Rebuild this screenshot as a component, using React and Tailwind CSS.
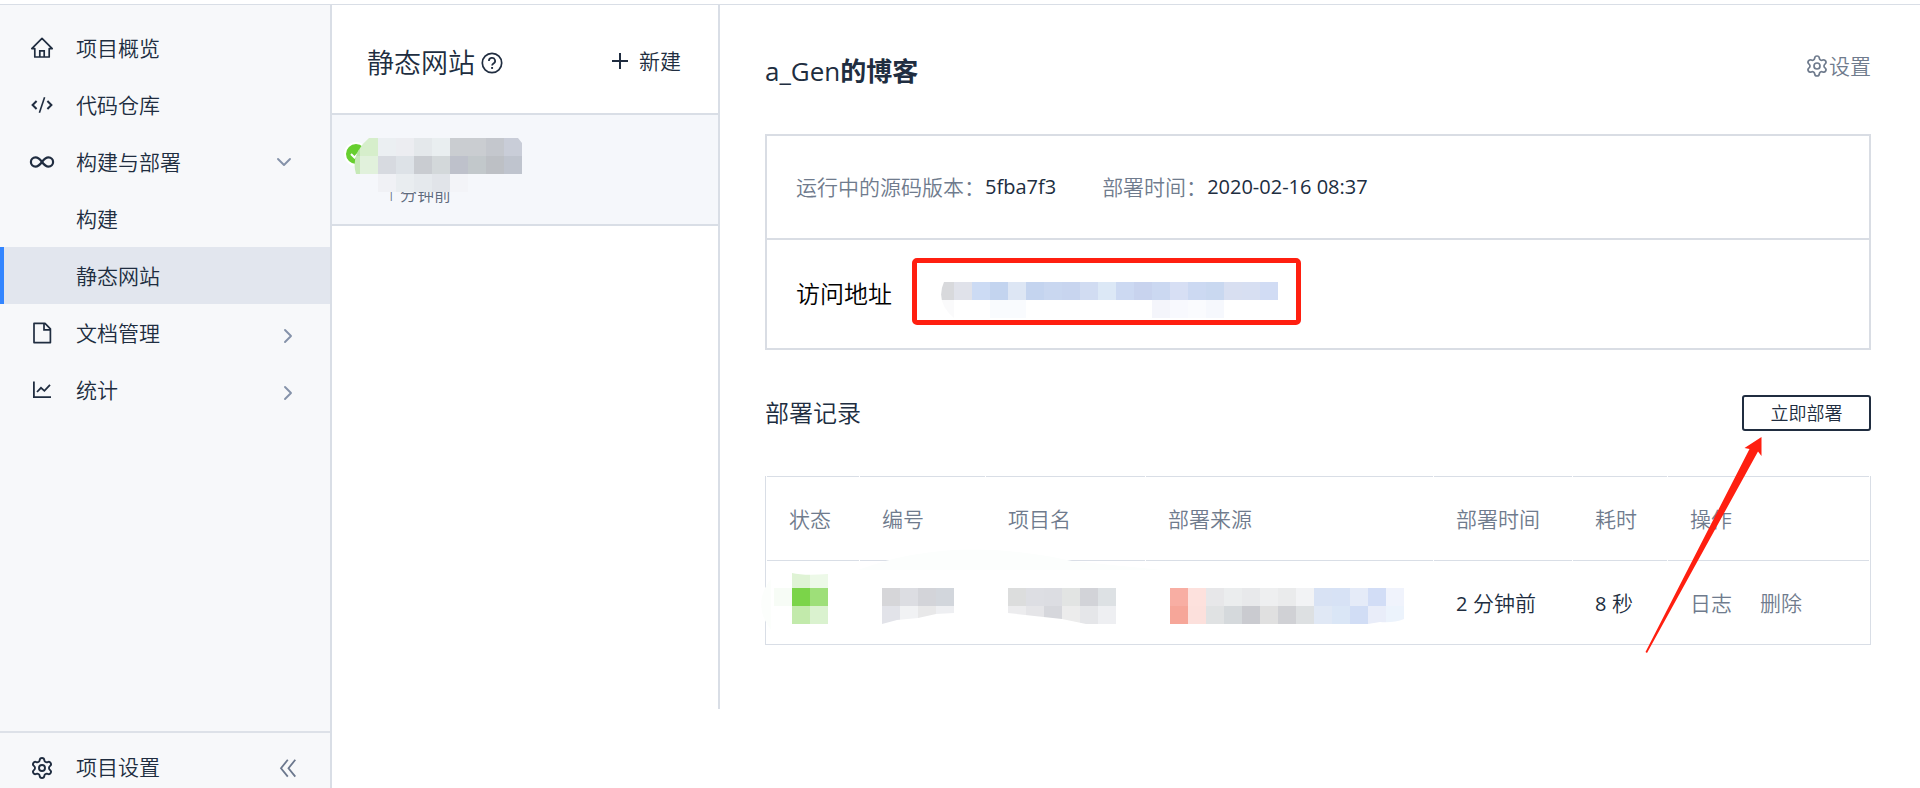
import { useId } from "react";
import { ChevronDown, ChevronRight, Settings } from "lucide-react";

function HomeIcon() {
  return (
    <svg className="w-6 h-6" viewBox="0 0 24 24" fill="none" stroke="currentColor" strokeWidth="1.7">
      <path d="M1.8 12.6 12 2.4l10.2 10.2H19.2V21H4.8v-8.4Z" strokeLinejoin="round" />
      <path d="M9.8 21v-6.2h4.4V21" />
    </svg>
  );
}

function CodeIcon() {
  return (
    <svg className="w-6 h-6" viewBox="0 0 24 24" fill="none" stroke="currentColor" strokeWidth="2">
      <path d="M6.6 8 2.6 12l4 4M17.4 8l4 4-4 4" />
      <path d="M14.6 4.2 9.4 19.8" strokeWidth="1.6" />
    </svg>
  );
}

function InfinityIcon() {
  return (
    <svg
      className="w-6 h-6 overflow-visible"
      viewBox="0 0 24 24"
      fill="none"
      stroke="currentColor"
      strokeWidth="2.2"
    >
      <path d="M12 12C9.500 8.600 7.800 7.400 5.500 7.400a4.600 4.600 0 0 0 0 9.200c2.300 0 4-1.200 6.500-4.600s4.200-4.600 6.500-4.600a4.600 4.600 0 0 1 0 9.200c-2.300 0-4-1.200-6.500-4.600Z" />
    </svg>
  );
}

function FileIcon() {
  return (
    <svg className="w-6 h-6" viewBox="0 0 24 24" fill="none" stroke="currentColor" strokeWidth="1.7">
      <path d="M4 2.4h11l5.400 5.400v13.800H4Z" strokeLinejoin="round" />
      <path d="M14 2.400v6.400h6.400" />
    </svg>
  );
}

function ChartIcon() {
  return (
    <svg className="w-6 h-6" viewBox="0 0 24 24" fill="none" stroke="currentColor" strokeWidth="1.8">
      <path d="M3.900 3.500v15.600h17.100" />
      <path d="m7 14 4-4.200 3.400 3L20 6.800" />
    </svg>
  );
}

function HelpIcon() {
  return (
    <svg className="w-[22px] h-[22px]" viewBox="0 0 22 22" fill="none" stroke="currentColor" strokeWidth="1.7">
      <circle cx="11" cy="11" r="9.700" />
      <path d="M7.900 8.900a3.100 3 0 1 1 4.700 2.500c-1 .7-1.500 1-1.500 2.200" />
      <path d="M11.100 15v1.900" strokeWidth="1.9" />
    </svg>
  );
}

// Grid of 18px tiles, cut to an outline
function Mosaic({ rows, outline, children }) {
  const id = useId();
  const width = rows[0].length * 18;
  const height = rows.length * 18;

  return (
    <svg
      className="block overflow-visible"
      width={width}
      height={height}
      viewBox={`0 0 ${width} ${height}`}
      aria-hidden="true"
    >
      {children}
      <clipPath id={id}>
        <path d={outline} />
      </clipPath>
      <g clipPath={`url(#${id})`} shapeRendering="crispEdges">
        {rows.map((row, y) =>
          row.map(
            (color, x) =>
              color && (
                <rect key={`${x}-${y}`} x={x * 18} y={y * 18} width="18" height="18" fill={color} />
              )
          )
        )}
      </g>
    </svg>
  );
}

const _ = null;

const siteTiles = [
  ["#b9e4a6", "#d6eecb", "#ebeff2", "#ecedf1", "#e4e8eb", "#e9eef0", "#cacdd1", "#cacdd1", "#c4c7cd", "#c9cdd8"],
  ["#c6e9b7", "#e1f1dc", "#d7dae0", "#dde2e7", "#c9ccd1", "#d3d8da", "#bec1cb", "#c2c8cb", "#bdc0c5", "#bfc4ce"],
  [_, _, "#f0f1f5", "#e9edf0", "#e5e9ed", "#e1e4e9", "#f3f4f8", _, _, _],
];

const urlTiles = [
  ["#d8d9dc", "#e0e2ea", "#ccdbf4", "#c3d4ef", "#dde6f4", "#c4d4ef", "#c9d7f0", "#c8d5ef", "#d1dcf2", "#dce8f6", "#ccd9f2", "#c8d3ee", "#cbd8f1", "#d7dff4", "#ccd9f2", "#c9d8f0", "#d8dff1", "#d7dff2", "#d1dcf4"],
  ["#fafafb", _, _, "#f9fbfe", "#f9fbfe", _, _, _, _, _, _, _, "#f4f5fb", "#f8f9fe", "#fafbfe", "#f6f8fd", _, _, _],
];

const statusTiles = [
  [_, "#dff3d5", "#edf9e8"],
  ["#f7fcf6", "#7bd449", "#9edf79"],
  [_, "#c2eaab", "#daf2cf"],
];

const numberTiles = [
  [_, _, _, _],
  ["#d6d6d9", "#dcdde2", "#d3d4d9", "#d2d6dc"],
  ["#e2e3e9", "#f1f2f4", "#e8e8e9", "#eeeff2"],
];

const projectTiles = [
  [_, _, _, _, _, _],
  ["#dcdddd", "#dddee3", "#dcdde2", "#e2e4e3", "#d2d3d8", "#dde1e4"],
  ["#ececee", "#e5e5e8", "#d6d7dc", "#ececec", "#e5e6e9", "#eeeff2"],
];

const sourceTiles = [
  [_, _, _, _, _, _, _, _, _, _, _, _, _],
  ["#f8aea3", "#fde1dd", "#e7e7e9", "#ebedee", "#e8e9eb", "#eeeff0", "#eaebec", "#f2f3f5", "#d8e2f4", "#d7e2f5", "#e5ebf8", "#d2ddf6", "#f0f3fc"],
  ["#f6a699", "#fce0dc", "#e0e2e3", "#d5d9dc", "#cacbd0", "#e0e0e0", "#d0d1d5", "#dde0e2", "#e0e8f5", "#dae6f6", "#d1ddf5", "#e9edf9", "#ecf3fc"],
];

const navItems = [
  { label: "项目概览", icon: <HomeIcon /> },
  { label: "代码仓库", icon: <CodeIcon /> },
  { label: "构建与部署", icon: <InfinityIcon />, arrow: "down" },
  { label: "构建" },
  { label: "静态网站", active: true },
  { label: "文档管理", icon: <FileIcon />, arrow: "right" },
  { label: "统计", icon: <ChartIcon />, arrow: "right" },
];

function Sidebar() {
  return (
    <aside className="w-[332px] shrink-0 flex flex-col bg-[#f7f8fa] border-r-2 border-[#d9dee6]">
      <nav className="pt-[14px]">
        {navItems.map((item) => (
          <a
            key={item.label}
            href="#"
            className={
              item.active
                ? "h-[57px] flex items-center pl-[26px] pr-8 border-l-4 border-[#3385ff] bg-[#e2e6ee]"
                : "h-[57px] flex items-center pl-[26px] pr-8 border-l-4 border-transparent"
            }
          >
            <span className="w-6 h-6 mr-[22px]">{item.icon}</span>
            <span className="flex-1">{item.label}</span>
            {item.arrow === "down" && (
              <ChevronDown className="w-6 h-6 mr-[2px] text-[#8592a9]" strokeWidth={1.9} />
            )}
            {item.arrow === "right" && (
              <ChevronRight className="w-6 h-6 -mr-[2px] mt-[6px] text-[#8592a9]" strokeWidth={1.9} />
            )}
          </a>
        ))}
      </nav>

      <div className="mt-auto border-t-2 border-[#dde1e8] flex items-center pt-[19px] pb-[5px] pl-[30px] pr-8">
        <a href="#" className="flex-1 flex items-center leading-[31px]">
          <Settings className="w-6 h-6 mr-[22px]" strokeWidth={1.9} />
          项目设置
        </a>
        <button type="button" aria-label="收起" className="text-[#6c788e]">
          <svg className="w-5 h-5" viewBox="0 0 20 20" fill="none" stroke="currentColor" strokeWidth="1.8">
            <path d="M9.800 1.800 3 10.200l6.800 8.400M17.300 1.800l-6.800 8.400 6.800 8.400" />
          </svg>
        </button>
      </div>
    </aside>
  );
}

function SiteList() {
  return (
    <section className="w-[388px] shrink-0 border-r-2 border-[#d9dee6]">
      <div className="h-[110px] pl-[35px] pr-[37px] flex items-center justify-between border-b-2 border-[#d9dee6]">
        <div className="flex items-center gap-[6px] mt-2">
          <h2 className="text-[27px]">静态网站</h2>
          <HelpIcon />
        </div>
        <button type="button" className="flex items-center gap-[11px] mt-1">
          <svg className="w-4 h-4" viewBox="0 0 16 16" stroke="currentColor" strokeWidth="2">
            <path d="M8 0v16M0 8h16" />
          </svg>
          新建
        </button>
      </div>

      <a href="#" className="relative block h-[111px] pt-[62px] pl-[54px] bg-[#f5f7fb] border-b-2 border-[#d9dee6]">
        <span className="text-[17px] leading-7 text-[#5f6b7d]">1 分钟前</span>
        {/* status badge and tiles lie over the site name */}
        <svg className="absolute left-[12px] top-[27px] w-6 h-6" viewBox="0 0 24 24">
          <circle cx="12" cy="12" r="11" fill="#67cf2f" stroke="#fff" strokeWidth="2" />
          <path d="m7 12 3.500 3.500L16.500 9" fill="none" stroke="#fff" strokeWidth="2" />
        </svg>
        <span className="absolute left-[10px] top-[23px]">
          <Mosaic rows={siteTiles} outline="M14 36Q8 16 27 0H176L180 5V36H126V54H36V36Z">
            <path d="M36 36H126V54H36Z" fill="#f5f7fb" />
          </Mosaic>
        </span>
      </a>
    </section>
  );
}

function Arrow() {
  return (
    <svg
      className="absolute right-[108px] top-[41px] pointer-events-none"
      width="118"
      height="217"
      viewBox="0 0 118 217"
      aria-hidden="true"
    >
      <path d="M116.500 1 99.500 12l5 1L.500 216l1.500 1L113 15.500l3.500 4.500Z" fill="#ff1f10" />
    </svg>
  );
}

function DeployRecords() {
  return (
    <section className="relative mt-[45px]">
      <div className="flex items-center justify-between">
        <h2 className="text-2xl leading-9">部署记录</h2>
        <button
          type="button"
          className="w-[129px] h-9 border-2 border-[#202d40] rounded-[3px] text-lg leading-8"
        >
          立即部署
        </button>
      </div>

      <div className="mt-[45px] border-x border-b border-[#d9dee6]">
        <table className="w-full table-fixed border-separate border-spacing-x-px border-spacing-y-0 text-left">
          <colgroup>
            <col className="w-[92px]" />
            <col className="w-[125px]" />
            <col className="w-[159px]" />
            <col className="w-[287px]" />
            <col className="w-[138px]" />
            <col className="w-[94px]" />
            <col />
          </colgroup>
          <thead>
            <tr className="h-[85px] text-[#6f7b8d]">
              {["状态", "编号", "项目名", "部署来源", "部署时间", "耗时", "操作"].map((name) => (
                <th key={name} className="pl-[22px] font-[350] border-y border-[#d9dee6]">
                  {name}
                </th>
              ))}
            </tr>
          </thead>
          <tbody>
            <tr className="h-[83px]">
              <td className="align-top pt-[9px] pl-[7px]">
                <Mosaic rows={statusTiles} outline="M0 0H18V3Q30 6 54 4V54H0Z">
                  <path d="M-3 9C-16 25-16 43-3 60Z" fill="#fcfefc" />
                </Mosaic>
              </td>
              <td className="align-top pt-[9px] pl-[22px]">
                <Mosaic rows={numberTiles} outline="M0 0H72V43L54 44 36 48 15 50 0 54Z">
                  <path d="M-24 0Q70-36 190-9L280 0Z" fill="#fcfefd" />
                </Mosaic>
              </td>
              <td className="align-top pt-[9px] pl-[22px]">
                <Mosaic rows={projectTiles} outline="M0 0H108V54H78L54 49 0 43Z" />
              </td>
              <td className="align-top pt-[9px] pl-6">
                <Mosaic rows={sourceTiles} outline="M0 0H234V49Q224 53 210 52L198 54H0Z" />
              </td>
              <td className="pl-[22px]">
                <span className="text-xl font-normal">2</span> 分钟前
              </td>
              <td className="pl-[22px]">
                <span className="text-xl font-normal">8</span> 秒
              </td>
              <td className="pl-[22px]">
                <div className="flex gap-7 text-[#6f7b8d]">
                  <a href="#">日志</a>
                  <a href="#">删除</a>
                </div>
              </td>
            </tr>
          </tbody>
        </table>
      </div>
      <Arrow />
    </section>
  );
}

export default function App() {
  return (
    <div className="min-h-screen flex flex-col pt-1 bg-white text-[21px] leading-8 font-[350] text-[#202d40] font-['Open_Sans','Noto_Sans_CJK_SC',sans-serif]">
      <div className="flex-1 flex border-t border-[#d9dee6]">
        <Sidebar />
        <div className="flex-1 min-w-0 flex self-start">
          <SiteList />
          <main className="flex-1 min-w-0 pt-[46px] pb-16 pl-[45px] pr-[49px]">
            <header className="flex items-start justify-between mb-[43px]">
              <h1 className="text-[26px] leading-10 font-medium">
                a_Gen<span className="font-bold">的博客</span>
              </h1>
              <a href="#" className="flex items-center leading-[30px] text-[#6f7b8d]">
                <Settings className="w-6 h-6" strokeWidth={1.7} />
                设置
              </a>
            </header>

            <div className="border-2 border-[#d9dde4]">
              <div className="h-[102px] px-[29px] flex items-center border-b-2 border-[#d9dde4] box-content">
                <span className="text-[#6f7b8d]">运行中的源码版本：</span>
                <span className="text-xl font-normal">5fba7f3</span>
                <span className="ml-[46px] text-[#6f7b8d]">部署时间：</span>
                <span className="text-xl font-normal">2020-02-16 08:37</span>
              </div>
              <div className="px-[29px] py-[18px] flex items-start">
                <span className="text-2xl leading-[72px] text-black">访问地址</span>
                <a
                  href="#"
                  aria-label="访问地址"
                  className="ml-5 pt-[19px] pb-[2px] pl-[19px] pr-[18px] border-[5px] border-[#ff1f10] rounded-[5px]"
                >
                  <Mosaic rows={urlTiles} outline="M8 0H342V36H18Q-1 20 8 0Z" />
                </a>
              </div>
            </div>

            <DeployRecords />
          </main>
        </div>
      </div>
    </div>
  );
}
